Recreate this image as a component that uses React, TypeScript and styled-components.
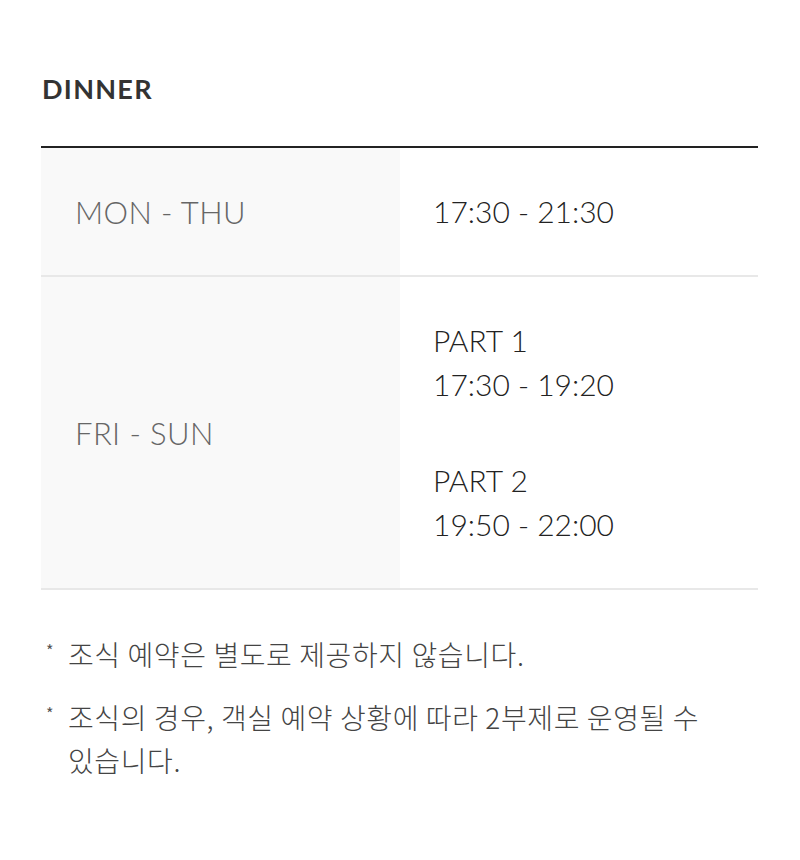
import React from 'react';
import styled, { createGlobalStyle } from 'styled-components';

const GlobalStyle = createGlobalStyle`
  html, body {
    margin: 0;
    padding: 0;
    background: #fff;
  }
  body {
    font-family: 'Lato', 'Noto Sans CJK KR', sans-serif;
  }
`;

const schedule = [
  { day: 'MON - THU', parts: [{ time: '17:30 - 21:30' }] },
  {
    day: 'FRI - SUN',
    parts: [
      { label: 'PART 1', time: '17:30 - 19:20' },
      { label: 'PART 2', time: '19:50 - 22:00' },
    ],
  },
];

const notes = [
  '조식 예약은 별도로 제공하지 않습니다.',
  '조식의 경우, 객실 예약 상황에 따라 2부제로 운영될 수 있습니다.',
];

const App = () => {
  return (
    <>
      <GlobalStyle />
      <Wrap>
        <Title>DINNER</Title>
        <Table>
          {schedule.map((row) => (
            <Row key={row.day}>
              <DayCell>{row.day}</DayCell>
              <TimeCell>
                {row.parts.map((p, i) => (
                  <Part key={i}>
                    {p.label && <Line>{p.label}</Line>}
                    <Line>{p.time}</Line>
                  </Part>
                ))}
              </TimeCell>
            </Row>
          ))}
        </Table>
        <Notes>
          {notes.map((n) => (
            <Note key={n}>{n}</Note>
          ))}
        </Notes>
      </Wrap>
    </>
  );
};

export default App;

const Wrap = styled.div`
  padding: 74px 42px 40px 41px;
`;

const Title = styled.h2`
  margin: 0 0 42px 1px;
  font-size: 27px;
  line-height: 30px;
  font-weight: 700;
  color: #333;
  letter-spacing: 1.3px;
`;

const Table = styled.div`
  border-top: 2px solid #222;
`;

const Row = styled.div`
  display: grid;
  grid-template-columns: 359px 1fr;
  border-bottom: 2px solid #e8e8e8;
`;

const DayCell = styled.div`
  display: flex;
  align-items: center;
  background: #f9f9f9;
  padding: 0 0 0 34px;
  font-size: 31px;
  font-weight: 300;
  letter-spacing: 0.4px;
  color: #666;
`;

const TimeCell = styled.div`
  display: flex;
  flex-direction: column;
  gap: 52px;
  padding: 41px 0 42px 33px;
`;

const Part = styled.div`
  display: flex;
  flex-direction: column;
`;

const Line = styled.div`
  font-size: 30px;
  line-height: 44px;
  font-weight: 300;
  color: #222;
`;

const Notes = styled.ul`
  list-style: none;
  margin: 43px 0 0 0;
  padding: 0 0 0 27px;
`;

const Note = styled.li`
  position: relative;
  font-family: 'Noto Sans CJK KR', sans-serif;
  font-size: 28px;
  line-height: 43px;
  font-weight: 300;
  letter-spacing: 0.6px;
  word-break: keep-all;
  color: #444;
  margin-bottom: 20px;

  &::before {
    content: '*';
    position: absolute;
    left: -22px;
    top: -4px;
    font-size: 16px;
    font-weight: 400;
    color: #555;
  }
`;
